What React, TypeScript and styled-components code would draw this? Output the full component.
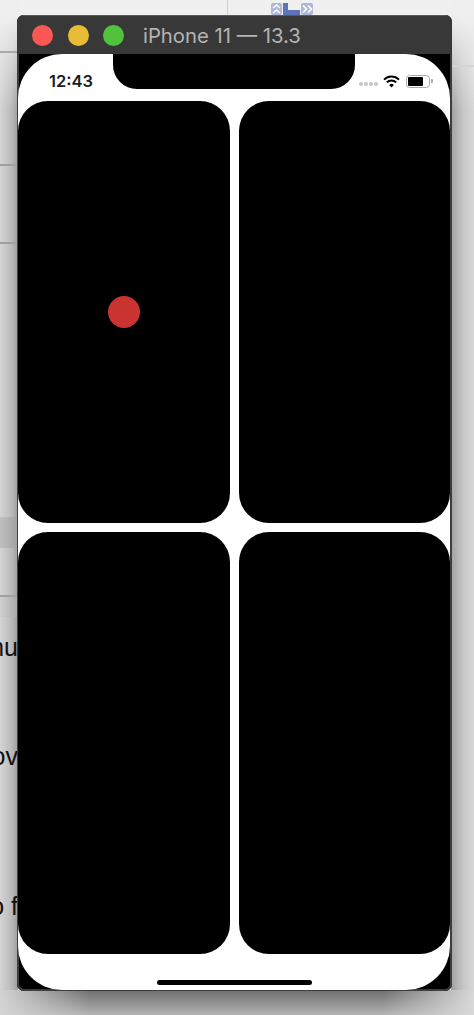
import React from 'react';
import styled, { createGlobalStyle } from 'styled-components';

const GlobalStyle = createGlobalStyle`
    html, body {
        margin: 0;
        padding: 0;
        background: #f0f0f0;
    }
`;

const Desktop = styled.div`
    position: relative;
    width: 474px;
    height: 1015px;
    overflow: hidden;
    box-sizing: border-box;
    padding: 15px 22px 24px 17px;
    background: #f0f0f0;
    font-family: 'Liberation Sans', Arial, sans-serif;
`;

// the window's drop shadow, one soft strip per side
const ShadeLeft = styled.div`
    position: absolute;
    left: 0;
    top: 0;
    height: 991px;
    width: 18px;
    background: linear-gradient(to bottom, #efefef 15px, transparent 110px),
        linear-gradient(to right, #d4d4d4, #bcbcbc 60%, #9e9e9e);
`;
const ShadeRight = styled.div`
    position: absolute;
    right: 0;
    top: 0;
    height: 991px;
    width: 23px;
    background: linear-gradient(to bottom, #efefef 15px, transparent 110px),
        linear-gradient(to left, #d8d8d8, #c4c4c4 50%, #a0a0a0);
`;
const ShadeBottom = styled.div`
    position: absolute;
    left: 0;
    right: 0;
    top: 990px;
    bottom: 0;
    background: linear-gradient(to right, #d4d4d4, transparent 90px, transparent 384px, #d8d8d8),
        linear-gradient(to bottom, #6e6e6e, #b4b4b4);
`;

// things from the window behind the simulator
const BackLine = styled.div<{ $top: number; $side: 'left' | 'right'; $color: string }>`
    position: absolute;
    ${(p) => p.$side}: 0;
    width: 30px;
    top: ${(p) => p.$top}px;
    height: 2px;
    background: ${(p) => p.$color};
`;
const BackDivider = styled.div`
    position: absolute;
    left: 227px;
    top: 0;
    width: 1px;
    height: 20px;
    background: #cfcfcf;
`;
const BackBand = styled.div`
    position: absolute;
    left: 0;
    width: 30px;
    top: 517px;
    height: 31px;
    background: linear-gradient(to right, #c0c0c0, #a0a0a0 60%);
`;
const BackStrip = styled.div`
    position: absolute;
    left: 0;
    width: 30px;
    top: 595px;
    height: 20px;
    background: linear-gradient(to right, #d0d0d0, #a8a8a8 60%);
    border-top: 2px solid #a0a0a0;
`;
const BackWord = styled.div<{ $top: number }>`
    position: absolute;
    right: 456px;
    top: ${(p) => p.$top}px;
    font-size: 25px;
    line-height: 28px;
    color: #111;
    white-space: nowrap;
`;
const BackIcon = styled.svg`
    position: absolute;
    left: 270px;
    top: 3px;
`;

const Simulator = styled.div`
    position: relative;
    height: 976px;
    border-radius: 7px;
    background: #000;
    display: flex;
    flex-direction: column;
    box-shadow: inset 0 0 0 2px #3d3d3d;
    overflow: hidden;
`;
const TitleBar = styled.div`
    height: 39px;
    flex: none;
    display: flex;
    align-items: center;
    padding-left: 15px;
    gap: 14.5px;
    background: #393838;
    border-top: 1px solid #5a5a5a;
    box-sizing: border-box;
`;
const Light = styled.span<{ $color: string }>`
    width: 21px;
    height: 21px;
    border-radius: 50%;
    background: ${(p) => p.$color};
`;
const Title = styled.span`
    margin: 1px 0 0 4.5px;
    font-family: 'Inter', 'Liberation Sans', sans-serif;
    font-size: 20.3px;
    color: #b4b4b4;
    white-space: nowrap;
`;

const Screen = styled.div`
    position: relative;
    flex: 1;
    margin: 0 2.5px 1px 1px;
    background: #fff;
    border-radius: 44px;
    display: flex;
    flex-direction: column;
    overflow: hidden;
`;
const StatusBar = styled.div`
    height: 47px;
    flex: none;
    display: flex;
    align-items: center;
    justify-content: space-between;
    padding: 0 20px 0 31px;
    box-sizing: border-box;
`;
const Clock = styled.span`
    font-family: 'Inter', 'Liberation Sans', sans-serif;
    font-size: 16.5px;
    font-weight: 600;
    color: #1c1c1c;
    margin-top: 7px;
`;
const Notch = styled.div`
    position: absolute;
    left: 95px;
    top: 0;
    width: 242px;
    height: 35px;
    background: #000;
    border-radius: 0 0 24px 24px;
`;
const StatusIcons = styled.div`
    display: flex;
    align-items: center;
    gap: 5px;
    margin-top: 7px;
`;
const SignalDots = styled.div`
    display: flex;
    gap: 1.5px;
    margin-top: 6px;
`;
const SignalDot = styled.span`
    width: 3.5px;
    height: 3.5px;
    border-radius: 50%;
    background: #c8c8c8;
`;
const Battery = styled.div`
    position: relative;
    width: 24px;
    height: 13px;
    box-sizing: border-box;
    border: 1.5px solid #aaaaaa;
    border-radius: 3.5px;
    padding: 1px;
    margin-left: 1px;
    &::after {
        content: '';
        position: absolute;
        right: -4px;
        top: 3px;
        width: 1.5px;
        height: 4px;
        background: #aaaaaa;
        border-radius: 0 1px 1px 0;
    }
`;
const BatteryFill = styled.div`
    width: 15px;
    height: 100%;
    background: #000;
    border-radius: 1px;
`;

const Grid = styled.div`
    display: grid;
    grid-template-columns: 212px 210.5px;
    grid-template-rows: 422px 422px;
    gap: 9px;
`;
const Pane = styled.div`
    background: #000;
    border-radius: 30px;
    display: flex;
    align-items: center;
    justify-content: center;
`;
const Dot = styled.div`
    width: 32px;
    height: 32px;
    border-radius: 50%;
    background: #c93431;
`;
const HomeBar = styled.div`
    flex: 1;
    display: flex;
    align-items: center;
    justify-content: center;
    padding: 21px 0 0 2px;
`;
const HomeIndicator = styled.div`
    width: 155px;
    height: 5px;
    border-radius: 3px;
    background: #000;
`;

const App = () => {
    return (
        <Desktop>
            <GlobalStyle />
            <ShadeLeft />
            <ShadeRight />
            <ShadeBottom />
            <BackLine $top={51} $side="left" $color="#a9a9a9" />
            <BackLine $top={65} $side="right" $color="#d4d4d4" />
            <BackLine $top={164} $side="left" $color="#a0a0a0" />
            <BackLine $top={242} $side="left" $color="#a0a0a0" />
            <BackDivider />
            <BackBand />
            <BackStrip />
            <BackWord $top={633}>mu</BackWord>
            <BackWord $top={742}>ov</BackWord>
            <BackWord $top={892}>o f</BackWord>
            <BackIcon width="44" height="12" viewBox="0 0 44 12">
                <rect x="1" y="0" width="11" height="12" rx="2" fill="#aeb8d6" />
                <path d="M3 5l3.5-3L10 5M3 10l3.5-3L10 10" fill="none" stroke="#fff" strokeWidth="1.6" />
                <path d="M13 0h5v7h12v5H13z" fill="#5d74b8" />
                <rect x="31" y="0" width="12" height="12" rx="2" fill="#aeb8d6" />
                <path d="M33 2.5l3.5 3.5L33 9.5M38 2.5l3.5 3.5L38 9.5" fill="none" stroke="#fff" strokeWidth="1.6" />
            </BackIcon>
            <Simulator>
                <TitleBar>
                    <Light $color="#fc5753" />
                    <Light $color="#e9bc35" />
                    <Light $color="#52c13e" />
                    <Title>iPhone 11 — 13.3</Title>
                </TitleBar>
                <Screen>
                    <Notch />
                    <StatusBar>
                        <Clock>12:43</Clock>
                        <StatusIcons>
                            <SignalDots>
                                <SignalDot />
                                <SignalDot />
                                <SignalDot />
                                <SignalDot />
                            </SignalDots>
                            <svg width="17" height="13" viewBox="0 0 17 13">
                                <path d="M1 4.6a10.6 10.6 0 0 1 15 0" fill="none" stroke="#000" strokeWidth="2" />
                                <path d="M3.8 7.4a6.6 6.6 0 0 1 9.4 0" fill="none" stroke="#000" strokeWidth="2" />
                                <path d="M6.2 10a3.2 3.2 0 0 1 4.6 0L8.5 12.6z" fill="#000" />
                            </svg>
                            <Battery>
                                <BatteryFill />
                            </Battery>
                        </StatusIcons>
                    </StatusBar>
                    <Grid>
                        <Pane>
                            <Dot />
                        </Pane>
                        <Pane />
                        <Pane />
                        <Pane />
                    </Grid>
                    <HomeBar>
                        <HomeIndicator />
                    </HomeBar>
                </Screen>
            </Simulator>
        </Desktop>
    );
};

export default App;
